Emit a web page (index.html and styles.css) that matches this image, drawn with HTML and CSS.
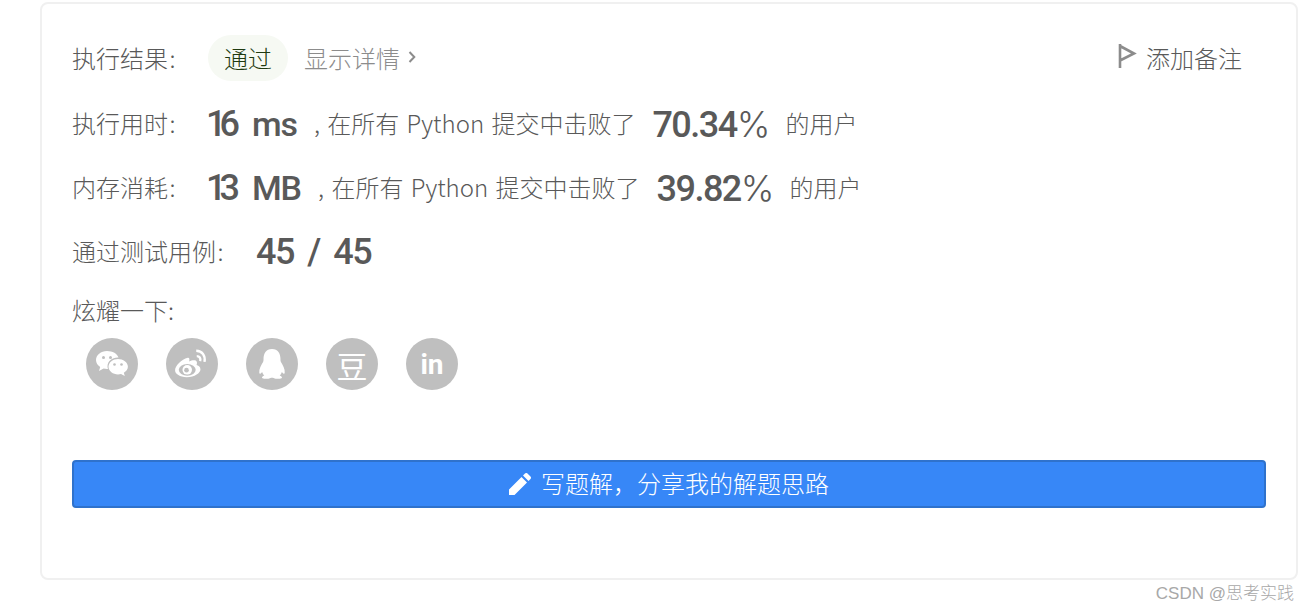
FILE: index.html
```html
<!DOCTYPE html>
<html lang="zh-CN">
<head>
<meta charset="UTF-8">
<meta name="viewport" content="width=device-width, initial-scale=1.0">
<title>提交结果</title>
<link rel="stylesheet" href="styles.css">
</head>
<body>
  <div class="card">
    <div class="row row-result">
      <span class="label">执行结果&#8202;:</span>
      <span class="pill">通过</span>
      <a class="details">显示详情
        <svg class="chevron" width="8" height="14" viewBox="0 0 8 14"><path d="M1.500 2 6.300 7l-4.800 5" fill="none" stroke="#8c8c8c" stroke-width="2"/></svg>
      </a>
      <a class="note">
        <svg class="flag" width="20" height="24" viewBox="0 0 20 24"><path d="M2 0v24M2 2l14 7.500L2 16.500" fill="none" stroke="#8c8c8c" stroke-width="2.600"/></svg>
        添加备注
      </a>
    </div>

    <div class="row row-stat">
      <span class="label">执行用时&#8202;:</span>
      <span class="big"><span class="one">1</span>6 <span class="unit">ms</span></span>
      <span class="text comma">, 在所有 Python 提交中击败了</span>
      <span class="big pct">70.34<i>%</i></span>
      <span class="text">的用户</span>
    </div>

    <div class="row row-stat">
      <span class="label">内存消耗&#8202;:</span>
      <span class="big"><span class="one">1</span>3 <span class="unit">MB</span></span>
      <span class="text comma">, 在所有 Python 提交中击败了</span>
      <span class="big pct">39.82<i>%</i></span>
      <span class="text">的用户</span>
    </div>

    <div class="row row-stat">
      <span class="label label-wide">通过测试用例&#8202;:</span>
      <span class="big">45 / 45</span>
    </div>

    <div class="share-title">炫耀一下:</div>
    <div class="share">
      <span class="share-icon">
        <svg width="34" height="30" viewBox="0 0 34 30">
          <path fill="#fff" d="M12 2C5.900 2 1 6 1 11c0 2.900 1.600 5.300 4.200 7L4 22l4.600-2.400c1.200.3 2.200.5 3.400.5h1c-.3-1-.5-1.900-.5-2.900 0-4.900 4.600-8.700 10.200-8.700h.8C22.400 4.800 17.600 2 12 2z"/>
          <path fill="#fff" d="M23 10c-5 0-9.500 3.400-9.500 7.700s4.500 7.700 9.500 7.700c1 0 2-.2 3-.4l3.800 2.100-1-3.300c2.400-1.500 4.100-3.700 4.100-6.100C33 13.400 28 10 23 10z"/>
          <circle cx="8.500" cy="8.500" r="1.500" fill="#bfbfbf"/><circle cx="15.500" cy="8.500" r="1.500" fill="#bfbfbf"/>
          <circle cx="19.500" cy="15.500" r="1.300" fill="#bfbfbf"/><circle cx="26.500" cy="15.500" r="1.300" fill="#bfbfbf"/>
        </svg>
      </span>
      <span class="share-icon">
        <svg width="36" height="32" viewBox="0 0 34 30">
          <path fill="#fff" d="M13 9C7 10.500 1 16.500 1 21c0 3.600 4.700 6.500 11 6.500 7.600 0 13-4 13-7.500 0-2.500-2.300-3.500-3.700-4 .8-2 .4-3.500-.8-4.200-1.500-.8-4.200-.2-6.200.8.500-2 .5-3.800-1.300-3.600z"/>
          <ellipse cx="12.500" cy="20.500" rx="8" ry="5.500" fill="#bfbfbf"/>
          <circle cx="12.500" cy="20.500" r="4.500" fill="#fff"/>
          <circle cx="11.800" cy="20.800" r="2.200" fill="#bfbfbf"/>
          <path d="M21 2.500c5.500 0 9 4.500 7.800 10.500M21.500 7.500c2.500 0 4 2 3.200 4.800" fill="none" stroke="#fff" stroke-width="2.200"/>
        </svg>
      </span>
      <span class="share-icon">
        <svg width="30" height="32" viewBox="0 0 30 34">
          <path fill="#fff" d="M15 1C8.500 1 6 6 6 11.500c0 1.500 0 2.500-.5 3.500C3.500 18.500 1 22.500 1.500 26.500c.3 1.500 1.500 1 3-1 .5 1.500 1.200 2.800 2.300 3.800-1.800.7-2.800 1.700-2.300 2.700 1 1.200 7 1 9.500-.5h2c2.500 1.500 8.500 1.700 9.500.5.500-1-.5-2-2.300-2.700 1.100-1 1.800-2.300 2.300-3.800 1.500 2 2.700 2.500 3 1 .5-4-2-8-4-11.500-.5-1-.5-2-.5-3.500C24 6 21.500 1 15 1z"/>
        </svg>
      </span>
      <span class="share-icon douban">豆</span>
      <span class="share-icon linkedin">in</span>
    </div>

    <button class="write-btn">
      <svg width="22" height="22" viewBox="0 0 22 22"><path fill="#fff" d="M0 22v-5.500L12.500 4l5.500 5.500L5.500 22zM14 2.500 16 .5c.7-.7 1.800-.7 2.500 0l3 3c.7.7.7 1.800 0 2.500l-2 2z"/></svg>
      <span class="btn-text">写题解&#xFF0C;分享我的解题思路</span>
    </button>
  </div>
  <div class="watermark">CSDN @思考实践</div>
</body>
</html>
```

FILE: styles.css
```css
html, body {
  height: 100%;
}

body {
  margin: 0;
  position: relative;
  overflow: hidden;
  background-color: #fff;
  color: #595959;
  font-family: "Noto Sans CJK SC", "Noto Sans", sans-serif;
  font-weight: 300;
}

.card {
  box-sizing: border-box;
  width: 1258px;
  height: 578px;
  margin: 2px 0 0 40px;
  padding: 30px 30px 0;
  border: 2px solid #f0f0f0;
  border-radius: 8px;
}

.row {
  display: flex;
  align-items: center;
}

.row-result {
  height: 48px;
  margin-bottom: 18px;
}

.row-stat {
  height: 48px;
  margin-bottom: 16px;
}

.label {
  width: 136px;
  flex: none;
  padding-bottom: 2px;
  font-size: 24px;
}

.row-stat .label {
  padding-bottom: 4px;
}

.label-wide {
  width: 184px;
}

.pill {
  width: 80px;
  height: 46px;
  border-radius: 23px;
  background-color: #f6f9f3;
  color: #1f3a10;
  font-size: 24px;
  line-height: 46px;
  text-align: center;
}

.details {
  display: flex;
  align-items: center;
  gap: 8px;
  margin-left: 16px;
  padding-bottom: 2px;
  color: #8c8c8c;
  font-size: 24px;
}

.note {
  display: flex;
  align-items: center;
  gap: 8px;
  margin-left: auto;
  margin-right: 24px;
  padding-bottom: 2px;
  color: #595959;
  font-size: 24px;
}

.flag {
  margin-bottom: 2px;
}

.big {
  font-family: Roboto, sans-serif;
  font-size: 36px;
  font-weight: 500;
  letter-spacing: -1.5px;
  word-spacing: 6px;
  white-space: pre;
}

/* Roboto's 1 is much wider than the one in the screenshot */
.one {
  margin-left: -2px;
  letter-spacing: -7px;
}

.unit {
  font-size: 34px;
  letter-spacing: -1px;
}

.pct {
  margin: 0 15px 0 17px;
}

.pct i {
  font-family: Inter, sans-serif;
  font-size: 36px;
  font-style: normal;
  font-weight: 300;
  letter-spacing: 0;
}

.text {
  padding-bottom: 4px;
  font-size: 24px;
  word-spacing: 2px;
  white-space: pre;
}

.comma {
  margin-left: 17px;
}

.share-title {
  font-size: 24px;
  line-height: 36px;
}

.share {
  display: flex;
  gap: 28px;
  margin: 10px 0 70px 14px;
}

.share-icon {
  display: flex;
  align-items: center;
  justify-content: center;
  width: 52px;
  height: 52px;
  border-radius: 50%;
  background-color: #bfbfbf;
  color: #fff;
}

.douban {
  font-size: 31px;
  font-weight: 400;
}

.linkedin {
  font-family: Roboto, sans-serif;
  font-size: 28px;
  font-weight: 700;
}

.write-btn {
  display: flex;
  align-items: center;
  justify-content: center;
  gap: 10px;
  width: 1194px;
  height: 48px;
  padding: 0;
  border: 2px solid #2f72cc;
  border-radius: 4px;
  background-color: #3787f7;
  color: #fff;
  font-family: inherit;
  font-size: 24px;
  font-weight: 300;
}

.btn-text {
  padding-bottom: 4px;
}

.watermark {
  position: absolute;
  right: 16px;
  bottom: 6px;
  color: #a8a8a8;
  font-family: "Liberation Sans", "Noto Sans CJK SC", sans-serif;
  font-size: 17px;
}
```
